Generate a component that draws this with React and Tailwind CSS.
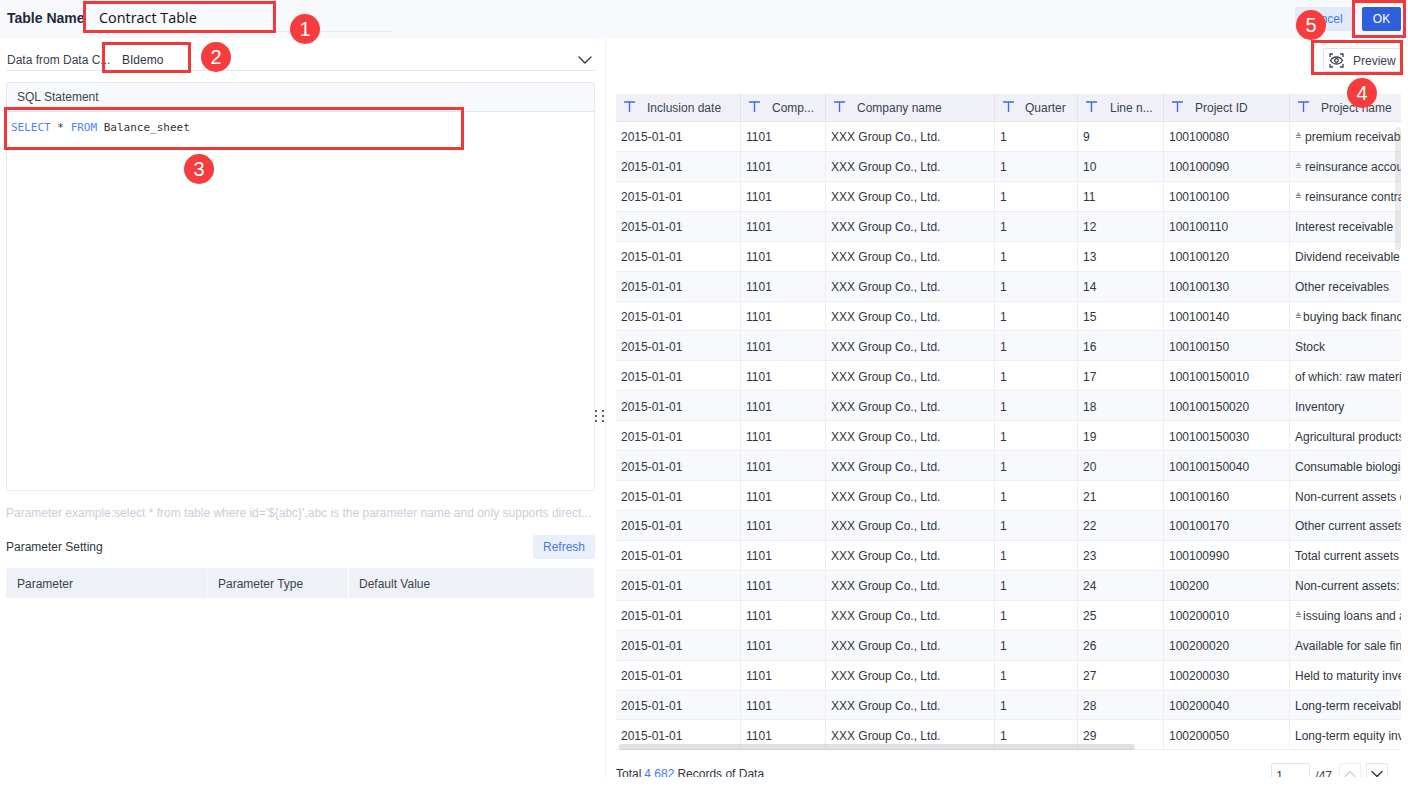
import React from "react";
import { ChevronDown, ChevronUp } from "lucide-react";

const columns = [
  { name: "Inclusion date", w: "w-[125px]", pad: "pl-[31px]" },
  { name: "Comp...", w: "w-[85px]", pad: "pl-[31px]" },
  { name: "Company name", w: "w-[169px]", pad: "pl-[31px]" },
  { name: "Quarter", w: "w-[83px]", pad: "pl-[30px]" },
  { name: "Line n...", w: "w-[86px]", pad: "pl-[32px]" },
  { name: "Project ID", w: "w-[126px]", pad: "pl-[31px]" },
  { name: "Project name", w: "w-[240px]", pad: "pl-[31px]" },
];

const rows = [
  ["9", "100100080", "premium receivable", true],
  ["10", "100100090", "reinsurance accounts", true],
  ["11", "100100100", "reinsurance contract", true],
  ["12", "100100110", "Interest receivable"],
  ["13", "100100120", "Dividend receivable"],
  ["14", "100100130", "Other receivables"],
  ["15", "100100140", "buying back financial", true, true],
  ["16", "100100150", "Stock"],
  ["17", "100100150010", "of which: raw materials"],
  ["18", "100100150020", "Inventory"],
  ["19", "100100150030", "Agricultural products"],
  ["20", "100100150040", "Consumable biological"],
  ["21", "100100160", "Non-current assets due"],
  ["22", "100100170", "Other current assets"],
  ["23", "100100990", "Total current assets"],
  ["24", "100200", "Non-current assets:"],
  ["25", "100200010", "issuing loans and adv", true, true],
  ["26", "100200020", "Available for sale financial"],
  ["27", "100200030", "Held to maturity investment"],
  ["28", "100200040", "Long-term receivables"],
  ["29", "100200050", "Long-term equity investment"],
];

function Marker({ n, className }) {
  return (
    <div className={`absolute flex h-[30px] w-[30px] items-center justify-center rounded-full bg-[#f63c3c] text-[20px] text-white ${className}`}>
      {n}
    </div>
  );
}

function RedBox({ className }) {
  return <div className={`absolute border-[3px] border-[#f03a3a] ${className}`}></div>;
}

function TypeIcon() {
  return (
    <svg className="absolute left-[7px] top-[6px]" width="13" height="13" viewBox="0 0 13 13" fill="none" stroke="#3f6ae0" strokeWidth="1.4">
      <path d="M1 2h11M6.5 2v10" />
    </svg>
  );
}

function PreviewIcon() {
  return (
    <svg width="15" height="15" viewBox="0 0 15 15" fill="none" stroke="#3a404a" strokeWidth="1.3">
      <path d="M1 4V1h3M11 1h3v3M14 11v3h-3M4 14H1v-3" />
      <path d="M1.5 7.5C3 5 5 4 7.500 4s4.500 1 6 3.500c-1.500 2.500-3.500 3.500-6 3.500s-4.500-1-6-3.500z" />
      <circle cx="7.500" cy="7.500" r="1.800" />
    </svg>
  );
}

export default function App() {
  return (
    <div className="relative h-[793px] w-[1408px] overflow-hidden bg-white font-['Liberation_Sans',Arial,sans-serif] text-[12px] text-[#2f3640]">
      {/* Header */}
      <div className="flex h-[39px] items-center justify-between bg-[#f8f9fd] pl-[7px] pr-[7px]">
        <div className="flex h-full items-start">
          <span className="mt-[10px] w-[78px] whitespace-nowrap text-[14px] font-bold leading-[16px] text-[#1f2a3a]">Table Name</span>
          <div className="flex h-[32px] w-[308px] items-center border-b border-[#e6e8ee] pl-[14px] pt-[5px] font-['Open_Sans',sans-serif] text-[14.4px] text-[#111]">
            Contract Table
          </div>
        </div>
        <div className="mb-[1px] flex items-center gap-[9px]">
          <button className="h-[24px] w-[58px] rounded-[2px] bg-[#e3e9f8] text-[12px] text-[#4a78e6]">Cancel</button>
          <button className="h-[24px] w-[39px] rounded-[2px] bg-[#2f5fdc] text-[12px] text-white">OK</button>
        </div>
      </div>

      <div className="flex h-[739px]">
        {/* Left panel */}
        <div className="relative flex w-[606px] flex-none flex-col border-r border-[#eef0f5] pl-[6px] pr-[10px]">
          <div className="flex h-[32px] items-center border-b border-[#e6e8ee] pl-[1px] pt-[10px]">
            <span className="mt-[1px] w-[115px] text-[#3a4350]">Data from Data C...</span>
            <span className="mt-[1px] flex-1 text-[#2f3640]">BIdemo</span>
            <ChevronDown className="-my-1 -mr-[2px] text-[#2b3442]" size={24} strokeWidth={1.3} />
          </div>
          <div className="mt-[11px] flex h-[409px] flex-col rounded-[2px] border border-[#e8eaf0]">
            <div className="flex h-[29px] items-center border-b border-[#e2e5ec] bg-[#f8f9fd] pl-[10px] text-[#3a4350]">SQL Statement</div>
            <div className="pl-[4px] pt-[9px] font-['DejaVu_Sans_Mono','Liberation_Mono',monospace] text-[11px] leading-[13px]">
              <span className="text-[#4a86f0]">SELECT</span> * <span className="text-[#4a86f0]">FROM</span> Balance_sheet
            </div>
          </div>
          <p className="mt-[13px] truncate text-[#c9ced8]">Parameter example:select * from table where id='${"{abc}"}',abc is the parameter name and only supports direct...</p>
          <div className="mt-[13px] flex items-center justify-between">
            <span className="text-[#2f3640]">Parameter Setting</span>
            <button className="h-[24px] w-[62px] rounded-[2px] bg-[#e9effb] text-[#4a78e6]">Refresh</button>
          </div>
          <div className="mt-[9px] flex h-[30px] w-[588px] bg-[#eef1f6] pt-[1px] text-[#3a4350]">
            <div className="flex w-[201px] items-center pl-[11px]">Parameter</div>
            <div className="flex w-[141px] items-center border-l border-[#f6f7fa] pl-[10px]">Parameter Type</div>
            <div className="flex flex-1 items-center border-l border-white pl-[10px]">Default Value</div>
          </div>
          <div className="absolute right-[1px] top-[371px] grid grid-cols-2 gap-x-[5px] gap-y-[3px]">
            {[0, 1, 2, 3, 4, 5].map((i) => (
              <span key={i} className="h-[2px] w-[2px] bg-[#556070]"></span>
            ))}
          </div>
        </div>

        {/* Right panel */}
        <div className="flex min-w-0 flex-1 flex-col pl-[10px] pr-[7px]">
          <div className="flex h-[55px] flex-none items-start justify-end pt-[9px]">
            <button className="flex h-[24px] w-[78px] items-center gap-[9px] rounded-[2px] border border-[#e3e5ea] pl-[5px] pt-[1px] text-[#3a4350]">
              <PreviewIcon />
              Preview
            </button>
          </div>
          <div className="relative h-[656px] flex-none overflow-hidden">
            <div className="flex h-[28px] w-[914px] border-b border-[#e4e7ee] bg-[#eff1f6] text-[#3a4350]">
              {columns.map((c) => (
                <div key={c.name} className={`relative flex flex-none items-center border-r border-[#dfe2e9] ${c.w} ${c.pad}`}>
                  <TypeIcon />
                  {c.name}
                </div>
              ))}
            </div>
            {rows.map((r, i) => (
              <div key={r[0]} className={`flex h-[29.93px] w-[914px] items-center border-b border-[#eceef3] ${i % 2 ? "bg-[#f8f9fd]" : "bg-white"}`}>
                <div className="flex h-full w-[125px] flex-none items-center border-r border-[#eceef3] pl-[5px] pt-[2px]">2015-01-01</div>
                <div className="flex h-full w-[85px] flex-none items-center border-r border-[#eceef3] pl-[5px] pt-[2px]">1101</div>
                <div className="flex h-full w-[169px] flex-none items-center border-r border-[#eceef3] pl-[5px] pt-[2px]">XXX Group Co., Ltd.</div>
                <div className="flex h-full w-[83px] flex-none items-center border-r border-[#eceef3] pl-[5px] pt-[2px]">1</div>
                <div className="flex h-full w-[86px] flex-none items-center border-r border-[#eceef3] pl-[5px] pt-[2px]">{r[0]}</div>
                <div className="flex h-full w-[126px] flex-none items-center border-r border-[#eceef3] pl-[5px] pt-[2px]">{r[1]}</div>
                <div className="flex h-full w-[240px] flex-none items-center whitespace-nowrap pl-[5px] pt-[2px]">
                  {r[3] && <span className={`text-[8px] text-[#5b6472] ${r[4] ? "mr-[1px]" : "mr-[3px]"}`}>≙</span>}
                  {r[2]}
                </div>
              </div>
            ))}
            <div className="absolute bottom-0 left-[3px] h-[6px] w-[516px] rounded-[3px] bg-[#9a9a9a]/30"></div>
            <div className="absolute right-0 top-[33px] h-[123px] w-[6px] rounded-[3px] bg-[#9a9a9a]/20"></div>
          </div>
          <div className="flex h-[27px] flex-none items-start justify-between overflow-hidden pt-[15px]">
            <span className="whitespace-nowrap text-[#2f3640]">Total<span className="mx-[3px] text-[#4a78e6]">4 682</span>Records of Data</span>
            <div className="mr-[13px] -mt-[2px] flex items-start gap-[5px]">
              <div className="h-[24px] w-[39px] rounded-[2px] border border-[#e3e5ea] pl-[4px] pt-[3px]">1</div>
              <span className="mr-[2px] pt-[4px] text-[#3a4350]">/47</span>
              <div className="flex h-[24px] w-[22px] items-start justify-center rounded-[2px] border border-[#eceef3]"><ChevronUp size={20} strokeWidth={1.4} className="text-[#c9ced8]" /></div>
              <div className="flex h-[24px] w-[22px] items-start justify-center rounded-[2px] border border-[#e3e5ea]"><ChevronDown size={20} strokeWidth={1.6} className="text-[#2b3442]" /></div>
            </div>
          </div>
        </div>
      </div>

      {/* Annotations */}
      <RedBox className="left-[83px] top-[1px] h-[32px] w-[193px]" />
      <RedBox className="left-[102px] top-[42px] h-[31px] w-[89px]" />
      <RedBox className="left-[4px] top-[107px] h-[43px] w-[460px]" />
      <RedBox className="left-[1311px] top-[40px] h-[35px] w-[92px]" />
      <RedBox className="left-[1352px] top-[0px] h-[38px] w-[54px]" />
      <Marker n="1" className="left-[290px] top-[14px]" />
      <Marker n="2" className="left-[201px] top-[42px]" />
      <Marker n="3" className="left-[184px] top-[154px]" />
      <Marker n="4" className="left-[1347px] top-[78px]" />
      <Marker n="5" className="left-[1296px] top-[10px]" />
    </div>
  );
}
